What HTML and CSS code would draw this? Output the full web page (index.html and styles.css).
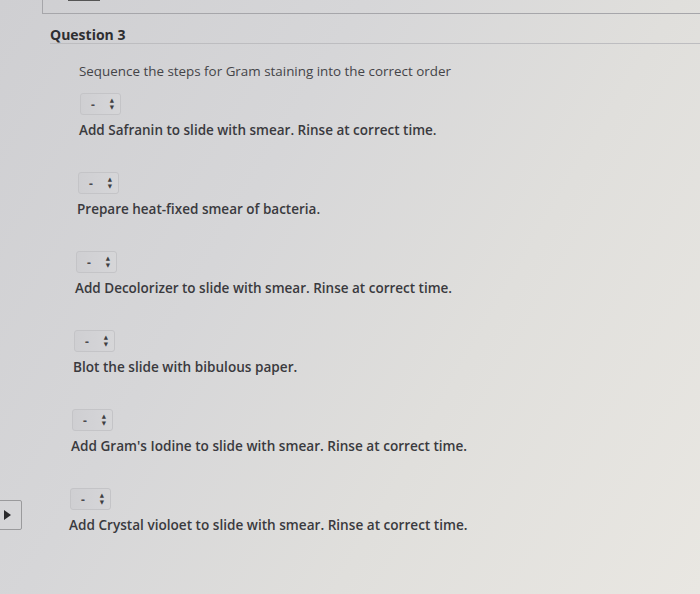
FILE: index.html
```html
<!DOCTYPE html>
<html>
<head>
<meta charset="utf-8">
<link rel="stylesheet" href="styles.css">
</head>
<body>
<div class="screen">
  <div class="topbar"><span class="topmark"></span></div>
  <div class="qhead">Question 3</div>
  <div class="prompt">Sequence the steps for Gram staining into the correct order</div>
  <div class="items">
    <div class="item">
      <div class="sel"><span class="dash">-</span><span class="arrows"><span class="up">&#9650;</span><span class="down">&#9660;</span></span></div>
      <div class="label">Add Safranin to slide with smear. Rinse at correct time.</div>
    </div>
    <div class="item">
      <div class="sel"><span class="dash">-</span><span class="arrows"><span class="up">&#9650;</span><span class="down">&#9660;</span></span></div>
      <div class="label">Prepare heat-fixed smear of bacteria.</div>
    </div>
    <div class="item">
      <div class="sel"><span class="dash">-</span><span class="arrows"><span class="up">&#9650;</span><span class="down">&#9660;</span></span></div>
      <div class="label">Add Decolorizer to slide with smear. Rinse at correct time.</div>
    </div>
    <div class="item">
      <div class="sel"><span class="dash">-</span><span class="arrows"><span class="up">&#9650;</span><span class="down">&#9660;</span></span></div>
      <div class="label">Blot the slide with bibulous paper.</div>
    </div>
    <div class="item">
      <div class="sel"><span class="dash">-</span><span class="arrows"><span class="up">&#9650;</span><span class="down">&#9660;</span></span></div>
      <div class="label">Add Gram's Iodine to slide with smear. Rinse at correct time.</div>
    </div>
    <div class="item">
      <div class="sel"><span class="dash">-</span><span class="arrows"><span class="up">&#9650;</span><span class="down">&#9660;</span></span></div>
      <div class="label">Add Crystal violoet to slide with smear. Rinse at correct time.</div>
    </div>
  </div>
  <div class="sidetab"><span class="tri"></span></div>
</div>
</body>
</html>
```
FILE: styles.css
```css
html, body {
  margin: 0;
  padding: 0;
}
body {
  width: 700px;
  height: 594px;
  overflow: hidden;
  font-family: "Open Sans", "Liberation Sans", sans-serif;
  color: #3b3b3e;
  background: linear-gradient(120deg, #cfcfd2 0%, #d6d6d8 35%, #e0dfdc 65%, #e9e7e2 100%);
}
.screen {
  position: relative;
  width: 700px;
  height: 594px;
}
.topbar {
  margin-left: 42px;
  height: 13px;
  border-left: 1px solid #a6a6aa;
  border-bottom: 1px solid #a6a6aa;
  position: relative;
}
.topmark {
  position: absolute;
  left: 25px;
  top: 0;
  width: 32px;
  height: 1px;
  background: #555;
}
.qhead {
  margin: 12px 0 0 50px;
  font-size: 14px;
  font-weight: 700;
  line-height: 17px;
  color: #2e2e31;
  border-bottom: 1px solid #bdbdc0;
}
.prompt {
  margin: 18px 0 0 79px;
  font-size: 13.4px;
  line-height: 18px;
  color: #444448;
}
.items {
  margin-top: 13px;
  display: flex;
  flex-direction: column;
  gap: 33px;
}
.item {
  display: flex;
  flex-direction: column;
  gap: 6px;
}
.item:nth-child(1) { margin-left: 79px; }
.item:nth-child(2) { margin-left: 77px; }
.item:nth-child(3) { margin-left: 75px; }
.item:nth-child(4) { margin-left: 73px; }
.item:nth-child(5) { margin-left: 71px; }
.item:nth-child(6) { margin-left: 69px; }
.item:nth-child(n+4) .label { font-size: 13.6px; }
.sel {
  width: 41px;
  height: 22px;
  box-sizing: border-box;
  margin-left: 1px;
  border: 1px solid #c4c4c7;
  border-radius: 3px;
  background: linear-gradient(90deg, #cfcfd2 0%, #d3d3d6 60%, #d6d6d8 100%);
  display: flex;
  align-items: center;
  justify-content: space-between;
  padding: 0 6px 0 10px;
  color: #4a4a4e;
}
.dash {
  font-size: 12px;
  line-height: 1;
  font-weight: 700;
  margin-top: 2px;
}
.arrows {
  display: flex;
  flex-direction: column;
  align-items: center;
  gap: 2px;
  font-family: "DejaVu Sans", sans-serif;
  font-size: 5.5px;
  line-height: 5px;
  color: #3e3e42;
}
.up, .down {
  display: block;
  height: 5px;
}
.label {
  font-size: 13.5px;
  font-weight: 600;
  line-height: 18px;
  color: #3a3a3e;
}
.sidetab {
  position: absolute;
  left: -2px;
  top: 500px;
  width: 24px;
  height: 30px;
  box-sizing: border-box;
  border: 1px solid #9a9a9c;
  border-radius: 2px;
  display: flex;
  align-items: center;
  padding-left: 5px;
}
.tri {
  width: 0;
  height: 0;
  border-top: 5px solid transparent;
  border-bottom: 5px solid transparent;
  border-left: 7px solid #2a2a2c;
}
```
